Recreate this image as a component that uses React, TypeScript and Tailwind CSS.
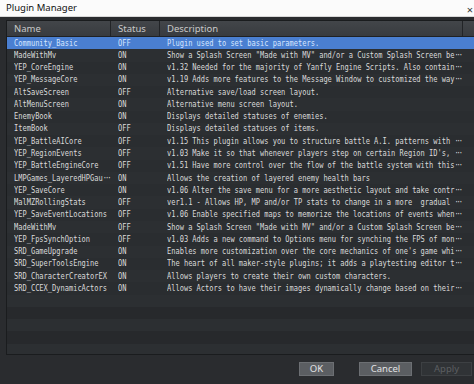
import React from "react";

const rows: [string, string, string][] = [
  ["Community_Basic", "OFF", "Plugin used to set basic parameters."],
  ["MadeWithMv", "ON", "Show a Splash Screen \"Made with MV\" and/or a Custom Splash Screen be⋯"],
  ["YEP_CoreEngine", "ON", "v1.32 Needed for the majority of Yanfly Engine Scripts. Also contain⋯"],
  ["YEP_MessageCore", "ON", "v1.19 Adds more features to the Message Window to customized the way⋯"],
  ["AltSaveScreen", "OFF", "Alternative save/load screen layout."],
  ["AltMenuScreen", "ON", "Alternative menu screen layout."],
  ["EnemyBook", "ON", "Displays detailed statuses of enemies."],
  ["ItemBook", "OFF", "Displays detailed statuses of items."],
  ["YEP_BattleAICore", "OFF", "v1.15 This plugin allows you to structure battle A.I. patterns with ⋯"],
  ["YEP_RegionEvents", "OFF", "v1.03 Make it so that whenever players step on certain Region ID's, ⋯"],
  ["YEP_BattleEngineCore", "OFF", "v1.51 Have more control over the flow of the battle system with this⋯"],
  ["LMPGames_LayeredHPGau⋯", "ON", "Allows the creation of layered enemy health bars"],
  ["YEP_SaveCore", "ON", "v1.06 Alter the save menu for a more aesthetic layout and take contr⋯"],
  ["MalMZRollingStats", "OFF", "ver1.1 - Allows HP, MP and/or TP stats to change in a more  gradual ⋯"],
  ["YEP_SaveEventLocations", "OFF", "v1.06 Enable specified maps to memorize the locations of events when⋯"],
  ["MadeWithMv", "OFF", "Show a Splash Screen \"Made with MV\" and/or a Custom Splash Screen be⋯"],
  ["YEP_FpsSynchOption", "OFF", "v1.03 Adds a new command to Options menu for synching the FPS of mon⋯"],
  ["SRD_GameUpgrade", "ON", "Enables more customization over the core mechanics of one's game whi⋯"],
  ["SRD_SuperToolsEngine", "ON", "The heart of all maker-style plugins; it adds a playtesting editor t⋯"],
  ["SRD_CharacterCreatorEX", "ON", "Allows players to create their own custom characters."],
  ["SRD_CCEX_DynamicActors", "ON", "Allows Actors to have their images dynamically change based on their⋯"],
];

const mono = { fontFamily: '"DejaVu Sans Mono", "Liberation Mono", monospace' };

function Cell({ w, text }: { w: string; text: string }) {
  const ell = text.endsWith("⋯");
  const body = ell ? text.slice(0, -1) : text;
  return (
    <div className={w + " shrink-0 pl-[7px] overflow-hidden"}>
      <span className="inline-block origin-left scale-x-[0.78] whitespace-pre">
        {body}
        {ell && <span className="tracking-[-2.6px]">···</span>}
      </span>
    </div>
  );
}

export default function App() {
  return (
    <div
      className="w-[474px] h-[384px] overflow-hidden bg-[#2c2e31] flex flex-col"
      style={{ fontFamily: '"Noto Sans", "Liberation Sans", sans-serif' }}
    >
      <div className="h-[17px] shrink-0 bg-[#fbfbfb] flex items-center justify-between pl-[6px] pr-[1px] border-b border-[#d8d8d8]">
        <span className="text-[9.5px] text-[#111] leading-none">Plugin Manager</span>
        <span className="text-[11px] text-[#333] leading-none mt-[2px]">×</span>
      </div>
      <div className="flex-1 flex flex-col pt-[3px] pl-[6px] bg-[#2a2c2f]">
        <div className="h-[335px] shrink-0 border-l border-t border-b border-[#1a1c1e] bg-[#2b2e31] overflow-hidden flex flex-col w-[480px]">
          <div className="h-[16px] shrink-0 flex bg-gradient-to-b from-[#43464a] to-[#383b3f] border-b border-[#1f2123] text-[9.5px] text-[#c9c9c9] leading-none">
            <div className="w-[104px] shrink-0 flex items-center pl-[7px] border-r border-[#222427]">Name</div>
            <div className="w-[49px] shrink-0 flex items-center pl-[7px] border-r border-[#222427]">Status</div>
            <div className="w-[303px] shrink-0 flex items-center pl-[7px] border-r border-[#222427]">Description</div>
            <div className="flex-1" />
          </div>
          {rows.map(([n, s, d], i) => {
            const sel = i === 0;
            return (
              <div
                key={i}
                className={
                  "h-[12.28px] shrink-0 flex items-center text-[9px] leading-none whitespace-nowrap " +
                  (sel
                    ? "bg-[#4a7fd1] text-[#d6e6ff]"
                    : i % 2 === 0
                    ? "bg-[#2a2d30] text-[#dadada]"
                    : "bg-[#2c2f32] text-[#dadada]")
                }
                style={mono}
              >
                <Cell w="w-[104px]" text={n} />
                <Cell w="w-[49px]" text={s} />
                <Cell w="w-[303px]" text={d} />
              </div>
            );
          })}
          {[0, 1, 2, 3, 4, 5].map((k) => (
            <div
              key={k}
              className={"h-[12.28px] shrink-0 " + (k % 2 === 0 ? "bg-[#2c2f32]" : "bg-[#27292c]")}
            />
          ))}
        </div>
        <div className="flex justify-end gap-[25px] pt-[7px] pr-[2px] text-[9.5px] leading-none">
          <div className="w-[35px] h-[14px] bg-[#5b5e62] border border-[#6c6f73] text-[#e2e2e2] flex items-center justify-center">OK</div>
          <div className="flex gap-[9px]">
            <div className="w-[53px] h-[14px] bg-[#5b5e62] border border-[#6c6f73] text-[#e2e2e2] flex items-center justify-center">Cancel</div>
            <div className="w-[51px] h-[14px] bg-[#303336] border border-[#3d4043] text-[#5c5f62] flex items-center justify-center">Apply</div>
          </div>
        </div>
      </div>
    </div>
  );
}
